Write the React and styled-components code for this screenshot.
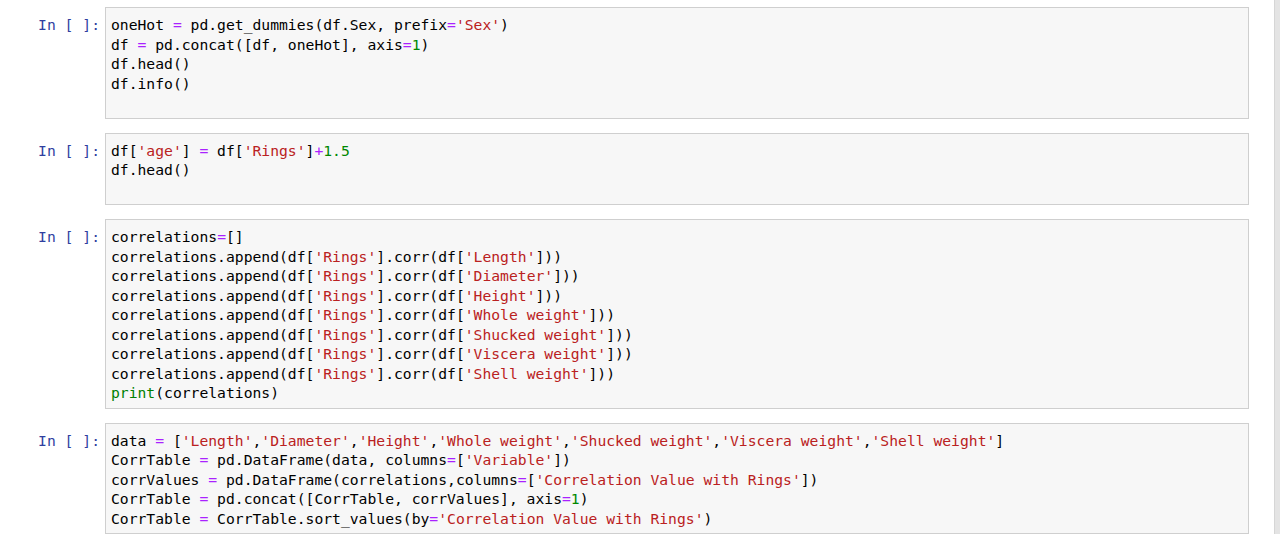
import React from "react";
import styled, { createGlobalStyle } from "styled-components";

const Global = createGlobalStyle`
  html, body { margin: 0; padding: 0; background: #fff; }
  body { overflow: hidden; }
`;

const Page = styled.div`
  display: flex;
  height: 534px;
  overflow: hidden;
  background: #fff;
`;

const Notebook = styled.div`
  flex: 1;
  display: flex;
  flex-direction: column;
  gap: 14px;
  padding: 7px 25px 0 0;
  min-width: 0;
`;

const Scrollbar = styled.div`
  width: 5px;
  flex: none;
  background: #e4e4e4;
  border-left: 1px solid #d6d6d6;
`;

const Row = styled.div`
  display: flex;
  align-items: flex-start;
  flex: none;
  font-family: "DejaVu Sans Mono", "Liberation Mono", monospace;
  font-size: 14.7px;
  line-height: 19.5px;
`;

const Prompt = styled.div`
  width: 105px;
  flex: none;
  box-sizing: border-box;
  text-align: right;
  padding: 8px 5px 0 0;
  color: #303f9f;
  white-space: pre;
`;

const Cell = styled.div`
  flex: 1;
  min-width: 0;
  background: #f7f7f7;
  border: 1px solid #cfcfcf;
  padding: 7px 5px 5px;
  color: #000;
  white-space: pre;
  overflow: hidden;
`;

const Line = styled.div`
  height: 19.5px;
`;

const Tok = styled.span`
  color: ${(p) =>
    p.$kind === "str"
      ? "#ba2121"
      : p.$kind === "op"
      ? "#aa22ff"
      : p.$kind === "num"
      ? "#008800"
      : p.$kind === "builtin"
      ? "#008000"
      : "#000"};
`;

const tokenize = (line) => {
  const re = /('[^']*')|(\bprint\b)|(\d+(?:\.\d+)?)|([=+])/g;
  const out = [];
  let last = 0;
  let m;
  while ((m = re.exec(line))) {
    if (m.index > last) out.push(["txt", line.slice(last, m.index)]);
    const kind = m[1] ? "str" : m[2] ? "builtin" : m[3] ? "num" : "op";
    out.push([kind, m[0]]);
    last = re.lastIndex;
  }
  if (last < line.length) out.push(["txt", line.slice(last)]);
  return out;
};

const cells = [
  [
    "oneHot = pd.get_dummies(df.Sex, prefix='Sex')",
    "df = pd.concat([df, oneHot], axis=1)",
    "df.head()",
    "df.info()",
    "",
  ],
  ["df['age'] = df['Rings']+1.5", "df.head()", ""],
  [
    "correlations=[]",
    "correlations.append(df['Rings'].corr(df['Length']))",
    "correlations.append(df['Rings'].corr(df['Diameter']))",
    "correlations.append(df['Rings'].corr(df['Height']))",
    "correlations.append(df['Rings'].corr(df['Whole weight']))",
    "correlations.append(df['Rings'].corr(df['Shucked weight']))",
    "correlations.append(df['Rings'].corr(df['Viscera weight']))",
    "correlations.append(df['Rings'].corr(df['Shell weight']))",
    "print(correlations)",
  ],
  [
    "data = ['Length','Diameter','Height','Whole weight','Shucked weight','Viscera weight','Shell weight']",
    "CorrTable = pd.DataFrame(data, columns=['Variable'])",
    "corrValues = pd.DataFrame(correlations,columns=['Correlation Value with Rings'])",
    "CorrTable = pd.concat([CorrTable, corrValues], axis=1)",
    "CorrTable = CorrTable.sort_values(by='Correlation Value with Rings')",
  ],
];

export default function App() {
  return (
    <Page>
      <Global />
      <Notebook>
        {cells.map((lines, i) => (
          <Row key={i}>
            <Prompt>In [ ]:</Prompt>
            <Cell>
              {lines.map((l, j) => (
                <Line key={j}>
                  {tokenize(l).map(([k, t], n) => (
                    <Tok key={n} $kind={k}>
                      {t}
                    </Tok>
                  ))}
                </Line>
              ))}
            </Cell>
          </Row>
        ))}
      </Notebook>
      <Scrollbar />
    </Page>
  );
}
